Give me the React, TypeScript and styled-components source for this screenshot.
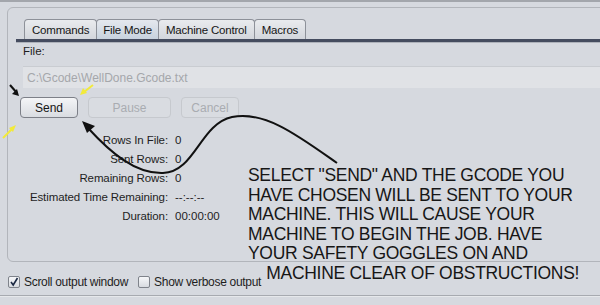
import React from "react"
import styled, { createGlobalStyle } from "styled-components"

const GlobalStyle = createGlobalStyle`
    html, body {
        margin: 0;
        padding: 0;
        background: #d6d9df;
    }
`

const Window = styled.div`
    position: relative;
    width: 600px;
    height: 305px;
    overflow: hidden;
    background: #d6d9df;
    font-family: "Liberation Sans", Arial, sans-serif;
    font-size: 11.5px;
    color: #1e1e1e;
    border-top: 2px solid #a3a6ac;
    box-sizing: border-box;
`

const Panel = styled.div`
    margin: 5px -20px 0 7px;
    height: 255px;
    box-sizing: border-box;
    border: 1px solid #b2b5bb;
    border-radius: 6px;
    padding: 11px 0 0 8px;
    display: flex;
    flex-direction: column;
`

const TabStrip = styled.div`
    display: flex;
    padding-left: 8px;
    border-bottom: 3px solid #454c5f;
    box-shadow: 0 1px 0 #aeb2ba;
`

const Tab = styled.div<{ $active?: boolean }>`
    height: 19px;
    padding: 0 ${(p) => (p.$active ? 6 : 7)}px;
    display: flex;
    align-items: center;
    border: 1px solid #8d9199;
    border-bottom: none;
    border-radius: 4px 4px 0 0;
    margin-right: -1px;
    font-size: 11.5px;
    letter-spacing: -0.2px;
    background: ${(p) =>
        p.$active
            ? "linear-gradient(#e4e8ee, #c8d2de)"
            : "linear-gradient(#e9ebee, #d3d6dc)"};
    color: #151515;
`

const Body = styled.div`
    padding: 3px 0 0 7px;
    display: flex;
    flex-direction: column;
`

const FieldLabel = styled.div`
    height: 14px;
`

const PathField = styled.div`
    margin-top: 7px;
    height: 21px;
    display: flex;
    align-items: center;
    padding-left: 4px;
    background: #e0e2e6;
    border-top: 1px solid #c9ccd1;
    color: #a5a7ab;
    font-size: 12px;
`

const ButtonRow = styled.div`
    display: flex;
    margin: 9px 0 0 -3px;
    gap: 10px;
`

const Button = styled.div<{ $disabled?: boolean; $w: number }>`
    width: ${(p) => p.$w}px;
    height: 21px;
    box-sizing: border-box;
    display: flex;
    align-items: center;
    justify-content: center;
    border-radius: 4px;
    border: 1px solid ${(p) => (p.$disabled ? "#c6c9ce" : "#7d8088")};
    background: ${(p) =>
        p.$disabled ? "#d9dce1" : "linear-gradient(#f4f5f7, #d9dce1)"};
    color: ${(p) => (p.$disabled ? "#a9acb1" : "#151515")};
    font-size: 12px;
`

const Stats = styled.div`
    display: grid;
    grid-template-columns: 145px auto;
    column-gap: 7px;
    row-gap: 5px;
    margin-top: 15px;
`

const StatLabel = styled.div`
    text-align: right;
    white-space: nowrap;
    height: 14px;
    line-height: 14px;
    letter-spacing: -0.1px;
`

const StatValue = styled.div`
    height: 14px;
    line-height: 14px;
`

const Footer = styled.div`
    display: flex;
    align-items: center;
    height: 26px;
    margin-top: 7px;
    padding-left: 8px;
    border-bottom: 1px solid #a7aab0;
    box-shadow: 0 1px 0 #e6e8eb;
`

const Check = styled.label`
    display: flex;
    align-items: center;
    gap: 4px;
    margin-right: 10px;
    font-size: 12px;
    letter-spacing: -0.3px;
`

const Box = styled.span`
    width: 12px;
    height: 12px;
    box-sizing: border-box;
    border: 1px solid #7f838b;
    border-radius: 2px;
    background: linear-gradient(#f6f7f9, #d8dbe0);
    display: flex;
    align-items: center;
    justify-content: center;
`

const Note = styled.div`
    position: absolute;
    left: 248px;
    top: 164px;
    font-family: "Liberation Sans", Arial, sans-serif;
    font-size: 17.5px;
    line-height: 19.5px;
    color: #161616;
    white-space: pre;
    letter-spacing: -0.3px;
`

const Overlay = styled.svg`
    position: absolute;
    left: 0;
    top: 0;
    pointer-events: none;
`

const stats = [
    ["Rows In File:", "0"],
    ["Sent Rows:", "0"],
    ["Remaining Rows:", "0"],
    ["Estimated Time Remaining:", "--:--:--"],
    ["Duration:", "00:00:00"],
]

export default function App() {
    return (
        <Window>
            <GlobalStyle />
            <Panel>
                <TabStrip>
                    <Tab>Commands</Tab>
                    <Tab $active>File Mode</Tab>
                    <Tab>Machine Control</Tab>
                    <Tab>Macros</Tab>
                </TabStrip>
                <Body>
                    <FieldLabel>File:</FieldLabel>
                    <PathField>C:\Gcode\WellDone.Gcode.txt</PathField>
                    <ButtonRow>
                        <Button $w={58}>Send</Button>
                        <Button $w={83} $disabled>Pause</Button>
                        <Button $w={58} $disabled>Cancel</Button>
                    </ButtonRow>
                    <Stats>
                        {stats.map(([k, v]) => (
                            <React.Fragment key={k}>
                                <StatLabel>{k}</StatLabel>
                                <StatValue>{v}</StatValue>
                            </React.Fragment>
                        ))}
                    </Stats>
                </Body>
            </Panel>
            <Footer>
                <Check>
                    <Box>
                        <svg width="10" height="10" viewBox="0 0 10 10">
                            <path d="M2 5 L4.2 8 L8.5 1" fill="none" stroke="#1d2a44" strokeWidth="1.6" />
                        </svg>
                    </Box>
                    Scroll output window
                </Check>
                <Check>
                    <Box />
                    Show verbose output
                </Check>
            </Footer>
            <Note>
                {`SELECT "SEND" AND THE GCODE YOU
HAVE CHOSEN WILL BE SENT TO YOUR
MACHINE. THIS WILL CAUSE YOUR
MACHINE TO BEGIN THE JOB. HAVE
YOUR SAFETY GOGGLES ON AND
    MACHINE CLEAR OF OBSTRUCTIONS!`}
            </Note>
            <Overlay width="600" height="305" viewBox="0 0 600 305">
                <path
                    d="M337 161 C300 135 265 108 232 115 C200 122 195 170 163 171 C135 172 110 150 88 126"
                    fill="none"
                    stroke="#111"
                    strokeWidth="2"
                />
                <path d="M82 119 L95 124 L87 131 Z" fill="#111" />
                <path d="M10 83 L17 91" stroke="#111" strokeWidth="2" />
                <path d="M19 94 L12 92 L17 87 Z" fill="#111" />
                <path d="M93 83 L84 90" stroke="#f2ea3a" strokeWidth="2" />
                <path d="M80 93 L83 86 L87 91 Z" fill="#f2ea3a" />
                <path d="M3 136 L12 127" stroke="#f2ea3a" strokeWidth="2" />
                <path d="M16 123 L9 126 L13 130 Z" fill="#f2ea3a" />
            </Overlay>
        </Window>
    )
}
